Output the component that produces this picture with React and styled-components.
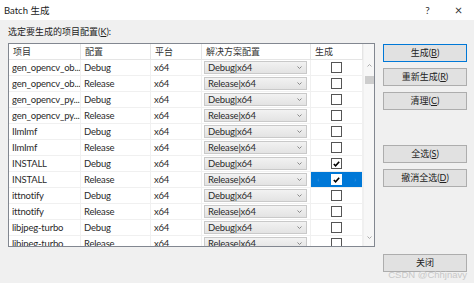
import React from "react";
import styled, { createGlobalStyle } from "styled-components";

const GlobalStyle = createGlobalStyle`
  html, body {
    margin: 0;
    padding: 0;
    background: #f0f0f0;
  }
  body {
    font-family: Lato, "Noto Sans CJK SC", sans-serif;
    font-size: 9px;
    color: #000;
  }
`;

const Window = styled.div`
  width: 474px;
  height: 283px;
  background: #f0f0f0;
  display: flex;
  flex-direction: column;
  overflow: hidden;
  position: relative;
`;

const TitleBar = styled.div`
  height: 20px;
  background: #fff;
  display: flex;
  align-items: center;
  padding-left: 4px;
  font-size: 9.5px;
  color: #1a1a1a;
`;

const TitleText = styled.span`
  flex: 1;
`;

const TitleButton = styled.span`
  width: 31px;
  text-align: center;
  font-size: ${(p) => p.size || 10}px;
  color: #333;
`;

const Body = styled.div`
  flex: 1;
  display: flex;
  padding: 0 7px 0 8px;
`;

const LeftPane = styled.div`
  width: 367px;
  display: flex;
  flex-direction: column;
`;

const Label = styled.div`
  height: 23px;
  line-height: 24px;
  font-size: 9px;
  color: #222;
`;

const U = styled.span`
  text-decoration: underline;
`;

const Table = styled.div`
  height: 202px;
  border: 1px solid #828790;
  background: #fff;
  display: flex;
  overflow: hidden;
`;

const Grid = styled.div`
  width: 354px;
  display: flex;
  flex-direction: column;
`;

const cols = "72px 70px 51px 109px 52px";

const HeaderRow = styled.div`
  display: grid;
  grid-template-columns: ${cols};
  height: 15px;
  border-bottom: 1px solid #e5e5e5;
`;

const HeaderCell = styled.div`
  font-size: 9px;
  line-height: 15px;
  padding-left: 4px;
  border-right: 1px solid #e5e5e5;
  color: #333;
`;

const Row = styled.div`
  display: grid;
  grid-template-columns: ${cols};
  height: 15px;
  border-bottom: 1px solid #f0f0f0;
  flex-shrink: 0;
`;

const Cell = styled.div`
  font-size: 9.5px;
  letter-spacing: -0.2px;
  line-height: 15px;
  padding-left: ${(p) => (p.pad ?? 3)}px;
  border-right: 1px solid #f0f0f0;
  white-space: nowrap;
  overflow: hidden;
  color: #2a2a2a;
  display: flex;
  align-items: center;
  justify-content: ${(p) => (p.center ? "center" : "flex-start")};
  background: ${(p) => (p.selected ? "#0078d7" : "transparent")};
  position: relative;
`;

const Combo = styled.div`
  width: 103px;
  height: 13px;
  margin-left: 2px;
  border: 1px solid #c9c9c9;
  background: linear-gradient(#f2f2f2, #e3e3e3);
  display: flex;
  align-items: center;
  justify-content: space-between;
  padding: 0 4px 0 3px;
  box-sizing: border-box;
  font-size: 9.5px;
  color: #2a2a2a;
`;

const Chevron = styled.svg`
  width: 5px;
  height: 3px;
`;

const Check = styled.div`
  width: 9px;
  height: 9px;
  border: 1px solid ${(p) => (p.selected ? "#fff" : "#555")};
  background: #fff;
  display: flex;
  align-items: center;
  justify-content: center;
`;

const FocusMark = styled.span`
  position: absolute;
  top: 0;
  font-size: 8px;
  line-height: 15px;
  color: #4a9ae0;
  ${(p) => (p.side === "l" ? "left: 6px;" : "right: 6px;")}
`;

const ScrollBar = styled.div`
  width: 11px;
  border-left: 1px solid #f0f0f0;
  background: #f7f7f7;
  display: flex;
  flex-direction: column;
  align-items: center;
`;

const Arrow = styled.svg`
  width: 5px;
  height: 3px;
  margin: ${(p) => p.m};
`;

const Thumb = styled.div`
  width: 9px;
  height: 8px;
  background: #cdcdcd;
  margin-top: 9px;
`;

const ScrollSpace = styled.div`
  flex: 1;
`;

const RightPane = styled.div`
  flex: 1;
  display: flex;
  flex-direction: column;
  align-items: flex-end;
  padding-top: 24px;
`;

const Button = styled.div`
  width: 84px;
  height: 18px;
  box-sizing: border-box;
  margin-top: ${(p) => p.gap || 0}px;
  border: 1px solid ${(p) => (p.primary ? "#0078d7" : "#adadad")};
  background: #e1e1e1;
  font-size: 9px;
  line-height: 16px;
  text-align: center;
  color: #222;
`;

const Watermark = styled.div`
  position: absolute;
  right: 7px;
  bottom: 3px;
  font-family: "Liberation Sans", sans-serif;
  font-size: 9.5px;
  color: #c8c8c8;
`;

const rows = [
  ["gen_opencv_ob...", "Debug"],
  ["gen_opencv_ob...", "Release"],
  ["gen_opencv_py...", "Debug"],
  ["gen_opencv_py...", "Release"],
  ["IlmImf", "Debug"],
  ["IlmImf", "Release"],
  ["INSTALL", "Debug", true],
  ["INSTALL", "Release", true, true],
  ["ittnotify", "Debug"],
  ["ittnotify", "Release"],
  ["libjpeg-turbo", "Debug"],
  ["libjpeg-turbo", "Release"],
];

const Tick = () => (
  <svg width="7" height="6" viewBox="0 0 7 6">
    <path d="M0.8 3 L2.6 4.8 L6.2 0.8" fill="none" stroke="#000" strokeWidth="1.6" />
  </svg>
);

export default function App() {
  return (
    <Window>
      <GlobalStyle />
      <TitleBar>
        <TitleText>Batch 生成</TitleText>
        <TitleButton>?</TitleButton>
        <TitleButton size={13}>×</TitleButton>
      </TitleBar>
      <Body>
        <LeftPane>
          <Label>
            选定要生成的项目配置(<U>K</U>):
          </Label>
          <Table>
            <Grid>
              <HeaderRow>
                <HeaderCell>项目</HeaderCell>
                <HeaderCell>配置</HeaderCell>
                <HeaderCell>平台</HeaderCell>
                <HeaderCell>解决方案配置</HeaderCell>
                <HeaderCell>生成</HeaderCell>
              </HeaderRow>
              {rows.map(([name, conf, checked, selected], i) => (
                <Row key={i}>
                  <Cell>{name}</Cell>
                  <Cell>{conf}</Cell>
                  <Cell>x64</Cell>
                  <Cell pad={0}>
                    <Combo>
                      <span>{conf}|x64</span>
                      <Chevron viewBox="0 0 5 3">
                        <path d="M0.5 0.5 L2.5 2.5 L4.5 0.5" fill="none" stroke="#888" strokeWidth="1" />
                      </Chevron>
                    </Combo>
                  </Cell>
                  <Cell pad={0} center selected={selected}>
                    {selected && <FocusMark side="l">‹</FocusMark>}
                    <Check selected={selected}>{checked && <Tick />}</Check>
                    {selected && <FocusMark side="r">›</FocusMark>}
                  </Cell>
                </Row>
              ))}
            </Grid>
            <ScrollBar>
              <Arrow viewBox="0 0 5 3" m="20px 0 0 0">
                <path d="M0.5 2.5 L2.5 0.5 L4.5 2.5" fill="none" stroke="#aaa" strokeWidth="1" />
              </Arrow>
              <Thumb />
              <ScrollSpace />
              <Arrow viewBox="0 0 5 3" m="0 0 7px 0">
                <path d="M0.5 0.5 L2.5 2.5 L4.5 0.5" fill="none" stroke="#aaa" strokeWidth="1" />
              </Arrow>
            </ScrollBar>
          </Table>
        </LeftPane>
        <RightPane>
          <Button primary>
            生成(<U>B</U>)
          </Button>
          <Button gap={6}>
            重新生成(<U>R</U>)
          </Button>
          <Button gap={6}>
            清理(<U>C</U>)
          </Button>
          <Button gap={35}>
            全选(<U>S</U>)
          </Button>
          <Button gap={6}>
            撤消全选(<U>D</U>)
          </Button>
          <Button gap={67}>关闭</Button>
        </RightPane>
      </Body>
      <Watermark>CSDN @Chhjnavy</Watermark>
    </Window>
  );
}
